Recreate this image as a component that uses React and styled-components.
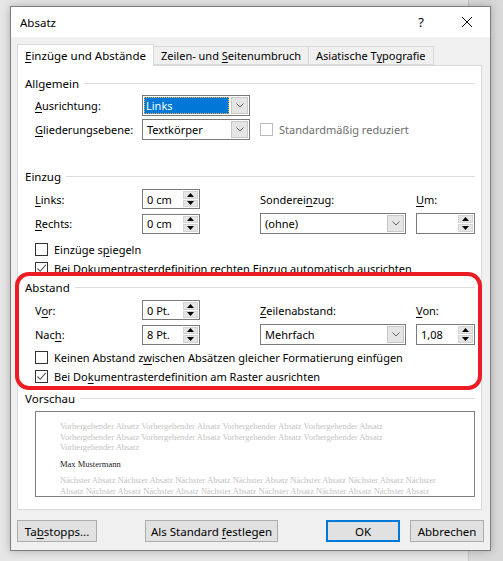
import React from "react";
import styled, { createGlobalStyle } from "styled-components";

const GlobalStyle = createGlobalStyle`
  html, body {
    margin: 0;
    padding: 0;
  }
  body {
    background: linear-gradient(
      to right,
      #e6e6e6 0,
      #e6e6e6 468px,
      #c4c4c4 468px,
      #c4c4c4 469px,
      #d9d9d9 469px
    );
    font-family: "Noto Sans", "Open Sans", sans-serif;
    font-size: 11px;
    color: #000;
  }
`;

const Page = styled.div`
  height: 561px;
  box-sizing: border-box;
  padding: 6px 0 0 10px;
`;

const Dialog = styled.div`
  width: 481px;
  height: 545px;
  box-sizing: border-box;
  border: 1px solid #7d7d7d;
  background: #f0f0f0;
  display: flex;
  flex-direction: column;
  box-shadow: 0 0 8px rgba(0, 0, 0, 0.25);
`;

const TitleBar = styled.div`
  height: 30px;
  background: #fff;
  display: flex;
  align-items: center;
  padding-left: 9px;
  font-size: 11.5px;
`;

const Title = styled.div`
  flex: 1;
`;

const CaptionButton = styled.div`
  width: 46px;
  height: 30px;
  display: flex;
  align-items: center;
  justify-content: center;
  font-size: 13px;
`;

const Body = styled.div`
  flex: 1;
  display: flex;
  flex-direction: column;
  padding: 7px 6px 0 6px;
`;

const TabStrip = styled.div`
  display: flex;
  align-items: flex-end;
  height: 21px;
`;

const Tab = styled.div`
  position: relative;
  z-index: ${(p) => (p.$active ? 1 : 0)};
  width: ${(p) => p.$width}px;
  height: ${(p) => (p.$active ? 22 : 19)}px;
  margin-bottom: ${(p) => (p.$active ? -1 : 0)}px;
  margin-left: ${(p) => (p.$first ? 0 : -1)}px;
  box-sizing: border-box;
  border: 1px solid #d9d9d9;
  border-bottom: ${(p) => (p.$active ? "none" : "1px solid #d9d9d9")};
  background: ${(p) => (p.$active ? "#fff" : "#f0f0f0")};
  display: flex;
  align-items: center;
  padding-left: 7px;
  padding-bottom: ${(p) => (p.$active ? 1 : 0)}px;
  white-space: nowrap;
  font-size: ${(p) => (p.$active ? 11.5 : 11)}px;
`;

const Panel = styled.div`
  width: 465px;
  height: 445px;
  box-sizing: border-box;
  background: #fff;
  border: 1px solid #d9d9d9;
  padding: 9px 6px 0 7px;
  display: flex;
  flex-direction: column;
`;

const Group = styled.div`
  position: relative;
  display: flex;
  flex-direction: column;
  margin-top: ${(p) => p.$mt || 0}px;
`;

const GroupHeader = styled.div`
  height: 16px;
  display: flex;
  align-items: center;
  gap: 5px;
  white-space: nowrap;
  font-size: 11.5px;

  &::after {
    content: "";
    flex: 1;
    height: 1px;
    background: #dcdcdc;
  }
`;

const Highlight = styled.div`
  position: absolute;
  top: -7px;
  bottom: -6px;
  left: -10px;
  right: -7px;
  border: 4px solid #ed1c24;
  border-radius: 14px;
  pointer-events: none;
`;

const Row = styled.div`
  display: grid;
  grid-template-columns: 107px 118px 156px 59px;
  align-items: center;
  height: ${(p) => p.$h || 20}px;
  margin-top: ${(p) => p.$mt || 0}px;
  margin-left: 10px;
`;

const Label = styled.div`
  white-space: nowrap;
  color: ${(p) => (p.$disabled ? "#6d6d6d" : "#000")};
`;

const Key = styled.span`
  text-decoration: underline;
  text-underline-offset: 2px;
`;

const Field = styled.div`
  width: ${(p) => p.$w}px;
  height: ${(p) => p.$h || 20}px;
  box-sizing: border-box;
  border: 1px solid #7a7a7a;
  background: #fff;
  display: flex;
`;

const FieldText = styled.div`
  flex: 1;
  display: flex;
  align-items: center;
  padding-left: 4px;
  white-space: nowrap;
`;

const SelectedText = styled.div`
  flex: 1;
  margin: 1px;
  display: flex;
  align-items: center;
  padding-left: 2px;
  background: #0078d7;
  color: #fff;
  outline: 1px dotted #f0b040;
  outline-offset: -1px;
`;

const DropButton = styled.div`
  width: 17px;
  margin: 1px;
  box-sizing: border-box;
  background: #e5e5e5;
  border: 1px solid #c8c8c8;
  display: flex;
  align-items: center;
  justify-content: center;
`;

const SpinButtons = styled.div`
  width: 15px;
  margin: 1px;
  display: flex;
  flex-direction: column;
  gap: 1px;
`;

const SpinHalf = styled.div`
  flex: 1;
  background: #e5e5e5;
  border: 1px solid #d4d4d4;
  display: flex;
  align-items: center;
  justify-content: center;
`;

const CheckRow = styled.div`
  display: flex;
  align-items: center;
  gap: 6px;
  height: 16px;
  margin-top: ${(p) => p.$mt || 0}px;
  margin-left: ${(p) => (p.$inline ? 0 : 10)}px;
  white-space: nowrap;
  grid-column: ${(p) => (p.$inline ? "3 / span 2" : "auto")};
`;

const Box = styled.div`
  width: 13px;
  height: 13px;
  box-sizing: border-box;
  border: 1px solid ${(p) => (p.$disabled ? "#bcbcbc" : "#333")};
  background: #fff;
  display: flex;
  align-items: center;
  justify-content: center;
`;

const Preview = styled.div`
  margin: 5px 0 0 10px;
  height: 86px;
  box-sizing: border-box;
  border: 1px solid #808080;
  background: #fff;
  overflow: hidden;
  padding: 9px 0 0 24px;
  font-family: "Liberation Serif", "Times New Roman", serif;
  font-size: 8.5px;
  line-height: 10.5px;
`;

const PreviewLine = styled.div`
  white-space: nowrap;
  color: ${(p) => (p.$main ? "#222" : "#c3c3c3")};
  margin-top: ${(p) => p.$mt || 0}px;
`;

const ButtonBar = styled.div`
  display: flex;
  align-items: center;
  margin-top: 10px;
`;

const Button = styled.div`
  width: ${(p) => p.$w}px;
  height: 22px;
  box-sizing: border-box;
  background: #e1e1e1;
  border: ${(p) => (p.$default ? "2px solid #0078d7" : "1px solid #adadad")};
  display: flex;
  align-items: center;
  justify-content: center;
  white-space: nowrap;
  font-size: 11.5px;
  margin-left: ${(p) => p.$ml || 0};
`;

const Chevron = () => (
  <svg width="8" height="5" viewBox="0 0 8 5">
    <path d="M0.5 0.5 L4 4 L7.5 0.5" fill="none" stroke="#606060" strokeWidth="1" />
  </svg>
);

const Up = () => (
  <svg width="7" height="4" viewBox="0 0 7 4">
    <path d="M0 4 L3.5 0 L7 4 Z" fill="#000" />
  </svg>
);

const Down = () => (
  <svg width="7" height="4" viewBox="0 0 7 4">
    <path d="M0 0 L3.5 4 L7 0 Z" fill="#000" />
  </svg>
);

const Check = () => (
  <svg width="11" height="11" viewBox="0 0 11 11">
    <path d="M1.5 5.5 L4.2 8.3 L9.8 1.8" fill="none" stroke="#555" strokeWidth="1.1" />
  </svg>
);

const CloseIcon = () => (
  <svg width="10" height="10" viewBox="0 0 10 10">
    <path d="M0 0 L10 10 M10 0 L0 10" stroke="#000" strokeWidth="1" />
  </svg>
);

function Combo({ width, height, value, selected }) {
  return (
    <Field $w={width} $h={height}>
      {selected ? <SelectedText>{value}</SelectedText> : <FieldText>{value}</FieldText>}
      <DropButton>
        <Chevron />
      </DropButton>
    </Field>
  );
}

function Spinner({ width = 58, height = 20, value }) {
  return (
    <Field $w={width} $h={height}>
      <FieldText>{value}</FieldText>
      <SpinButtons>
        <SpinHalf>
          <Up />
        </SpinHalf>
        <SpinHalf>
          <Down />
        </SpinHalf>
      </SpinButtons>
    </Field>
  );
}

function CheckBox({ checked, disabled, inline, mt, children }) {
  return (
    <CheckRow $mt={mt} $inline={inline}>
      <Box $disabled={disabled}>{checked && <Check />}</Box>
      <Label $disabled={disabled}>{children}</Label>
    </CheckRow>
  );
}

const before = "Vorhergehender Absatz";
const next = "Nächster Absatz";

export default function App() {
  return (
    <Page>
      <GlobalStyle />
      <Dialog>
        <TitleBar>
          <Title>Absatz</Title>
          <CaptionButton>?</CaptionButton>
          <CaptionButton>
            <CloseIcon />
          </CaptionButton>
        </TitleBar>
        <Body>
          <TabStrip>
            <Tab $active $first $width={137}>
              <span>
                <Key>E</Key>inzüge und Abstände
              </span>
            </Tab>
            <Tab $width={156}>
              <span>
                Zeilen- und <Key>S</Key>eitenumbruch
              </span>
            </Tab>
            <Tab $width={126}>
              <span>
                Asiatische T<Key>y</Key>pografie
              </span>
            </Tab>
          </TabStrip>
          <Panel>
            <Group>
              <GroupHeader>Allgemein</GroupHeader>
              <Row $h={21} $mt={4}>
                <Label>
                  <Key>A</Key>usrichtung:
                </Label>
                <Combo width={108} height={21} value="Links" selected />
              </Row>
              <Row $h={21} $mt={3}>
                <Label>
                  <Key>G</Key>liederungsebene:
                </Label>
                <Combo width={108} height={21} value="Textkörper" />
                <CheckBox disabled inline>
                  Standardmäßig reduziert
                </CheckBox>
              </Row>
            </Group>

            <Group $mt={28}>
              <GroupHeader>Einzug</GroupHeader>
              <Row $mt={5}>
                <Label>
                  <Key>L</Key>inks:
                </Label>
                <Spinner value="0 cm" />
                <Label>
                  Sonderei<Key>n</Key>zug:
                </Label>
                <Label>
                  <Key>U</Key>m:
                </Label>
              </Row>
              <Row $mt={4}>
                <Label>
                  <Key>R</Key>echts:
                </Label>
                <Spinner value="0 cm" />
                <Combo width={146} height={21} value="(ohne)" />
                <Spinner width={59} height={21} value="" />
              </Row>
              <CheckBox mt={8}>
                Einzüge s<Key>p</Key>iegeln
              </CheckBox>
              <CheckBox checked mt={3}>
                Bei Dokumentrasterdefinition rechten Einzug automatisch ausrichten
              </CheckBox>
            </Group>

            <Group $mt={3}>
              <GroupHeader>Abstand</GroupHeader>
              <Row $mt={5}>
                <Label>
                  V<Key>o</Key>r:
                </Label>
                <Spinner value="0 Pt." />
                <Label>
                  <Key>Z</Key>eilenabstand:
                </Label>
                <Label>
                  <Key>V</Key>on:
                </Label>
              </Row>
              <Row $mt={4}>
                <Label>
                  Nac<Key>h</Key>:
                </Label>
                <Spinner value="8 Pt." />
                <Combo width={146} height={21} value="Mehrfach" />
                <Spinner width={59} height={21} value="1,08" />
              </Row>
              <CheckBox mt={5}>
                Keinen Abstand z<Key>w</Key>ischen Absätzen gleicher Formatierung einfügen
              </CheckBox>
              <CheckBox checked mt={3}>
                Bei Do<Key>k</Key>umentrasterdefinition am Raster ausrichten
              </CheckBox>
              <Highlight />
            </Group>

            <Group $mt={6}>
              <GroupHeader>Vorschau</GroupHeader>
              <Preview>
                <PreviewLine>{[before, before, before, before].join(" ")}</PreviewLine>
                <PreviewLine>{[before, before, before, before].join(" ")}</PreviewLine>
                <PreviewLine>{before}</PreviewLine>
                <PreviewLine $main $mt={6}>
                  Max Mustermann
                </PreviewLine>
                <PreviewLine $mt={6}>
                  {[next, next, next, next, next, next, "Nächster"].join(" ")}
                </PreviewLine>
                <PreviewLine>
                  {["Absatz", next, next, next, next, next, next].join(" ")}
                </PreviewLine>
              </Preview>
            </Group>
          </Panel>
          <ButtonBar>
            <Button $w={80}>
              <span>
                Ta<Key>b</Key>stopps...
              </span>
            </Button>
            <Button $w={133} $ml="48px">
              <span>
                Als Standard <Key>f</Key>estlegen
              </span>
            </Button>
            <Button $w={74} $ml="auto" $default>
              OK
            </Button>
            <Button $w={74} $ml="10px">
              Abbrechen
            </Button>
          </ButtonBar>
        </Body>
      </Dialog>
    </Page>
  );
}
